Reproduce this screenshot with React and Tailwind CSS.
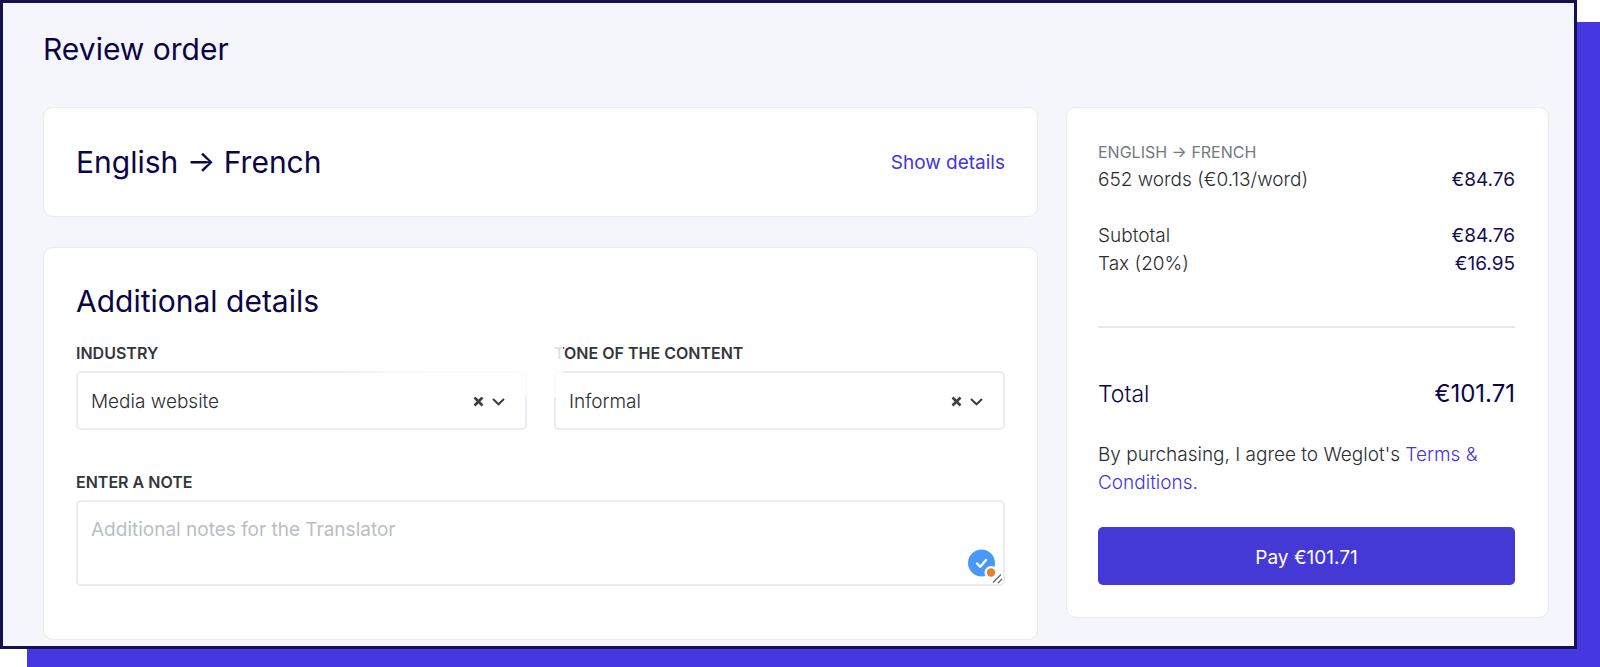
import React from "react";

const clearPath = "M1.5 1.5 L9.5 9.5 M9.5 1.5 L1.5 9.5";

function SelectField({ id, label, options, children }) {
  const [value, setValue] = React.useState(options[0]);
  return (
    <div className="relative flex min-w-0 flex-col gap-[6px]">
      <label htmlFor={id} className="text-base leading-6 font-semibold text-[#33363c] uppercase">
        {label}
      </label>
      <div className="flex h-[59px] items-center rounded-[5px] border-2 border-[#e9edf1] bg-white pt-[2px] pr-5">
        <select
          id={id}
          value={value}
          onChange={(e) => setValue(e.target.value)}
          className="h-full min-w-0 flex-1 appearance-none bg-transparent pt-[2px] pl-[13px] text-[19px] font-light text-[#2b2d31] outline-none"
        >
          <option value="" />
          {options.map((o) => (
            <option key={o}>{o}</option>
          ))}
        </select>
        <button type="button" aria-label={"Clear " + label} onClick={() => setValue("")} className="mr-2">
          <svg width="11" height="11" viewBox="0 0 11 11" fill="none" stroke="#3c3e42" strokeWidth="2.6">
            <path d={clearPath} />
          </svg>
        </button>
        <svg width="13" height="8" viewBox="0 0 13 8" fill="none" stroke="#3c3e42" strokeWidth="2" aria-hidden="true">
          <path d="M1 1 L6.5 6.3 L12 1" />
        </svg>
      </div>
      {children}
    </div>
  );
}

function Row({ label, value }) {
  return (
    <div className="flex justify-between">
      <dt className="font-light text-[#2b2d31]">{label}</dt>
      <dd className="text-[#150f52]">{value}</dd>
    </div>
  );
}

const card = "rounded-[10px] border border-[#e9ebf0] bg-white";
const title = "text-[30px] leading-9 font-normal text-[#0b0547]";
const link = "text-[#4334df]";

export default function App() {
  return (
    <div className="overflow-hidden bg-white pr-[23px] pb-[18px] font-['Inter',sans-serif]">
      <main className="border-[3px] border-[#15104e] bg-[#f5f6fb] pt-7 pr-[25px] pb-[6px] pl-10 shadow-[27px_22px_0_#4638e0]">
        <h1 className={title}>Review order</h1>
        <div className="mt-10 flex items-start gap-7">
          <div className="flex min-w-0 flex-1 flex-col gap-[30px]">
            <section className={card + " flex h-[110px] items-center justify-between px-8"}>
              <h2 className={title}>English → French</h2>
              <a href="#details" className={link + " pt-[3px] text-[19px]"}>Show details</a>
            </section>

            <section className={card + " px-8 pt-[35px] pb-[53px]"}>
              <h2 className={title}>Additional details</h2>
              <div className="mt-[22px] grid grid-cols-2 gap-[27px]">
                <SelectField id="industry" label="Industry" options={["Media website", "E-commerce"]} />
                <SelectField id="tone" label="Tone of the content" options={["Informal", "Formal"]}>
                  <div className="pointer-events-none absolute top-0 -left-[255px] h-14 w-[264px] bg-linear-to-r from-white/0 via-white/75 to-white/85" />
                </SelectField>
              </div>
              <div className="mt-10 flex flex-col gap-[6px]">
                <label htmlFor="note" className="text-base leading-6 font-semibold text-[#33363c] uppercase">
                  Enter a note
                </label>
                <div className="relative flex">
                  <textarea
                    id="note"
                    placeholder="Additional notes for the Translator"
                    className="h-[86px] flex-1 resize-none rounded-[5px] border-2 border-[#e9edf1] bg-white px-[13px] py-[14px] text-[19px] leading-7 outline-none placeholder:text-[#b9bec6]"
                  />
                  <svg className="absolute right-0 bottom-0" width="38" height="38" viewBox="0 0 38 38" aria-hidden="true">
                    <circle cx="14.5" cy="15" r="13.5" fill="#4a98f7" />
                    <path d="M10 15.5 L13.2 18.7 L19 12" fill="none" stroke="#fff" strokeWidth="2.4" strokeLinecap="round" strokeLinejoin="round" />
                    <circle cx="24" cy="24.5" r="6.5" fill="#fff" />
                    <circle cx="24" cy="24.5" r="4.2" fill="#e48136" />
                    <path d="M26 34.5 L34 26.5 M31 35 L35 31" fill="none" stroke="#6b6d72" strokeWidth="1.4" />
                  </svg>
                </div>
              </div>
            </section>
          </div>

          <aside className={card + " w-[483px] pr-[33px] pl-[31px] pt-[30px] pb-8 text-[19px] leading-7"}>
            <p className="text-base leading-7 text-[#727981] uppercase">English → French</p>
            <dl>
              <Row label="652 words (€0.13/word)" value="€84.76" />
              <div className="h-7" />
              <Row label="Subtotal" value="€84.76" />
              <Row label="Tax (20%)" value="€16.95" />
            </dl>
            <hr className="mt-[48px] border-t-2 border-[#e7e8ea]" />
            <div className="mt-[50px] flex justify-between text-[23px] leading-8 text-[#0b0547]">
              <span className="font-light">Total</span>
              <span className="text-2xl leading-8">€101.71</span>
            </div>
            <p className="mt-[31px] font-light text-[#2b2d31]">
              By purchasing, I agree to Weglot's <a href="#terms" className={link}>Terms &amp; Conditions.</a>
            </p>
            <button type="button" className="mt-[30px] h-[58px] w-full rounded-[5px] bg-[#4539d6] pt-[3px] text-white">
              Pay €101.71
            </button>
          </aside>
        </div>
      </main>
    </div>
  );
}
